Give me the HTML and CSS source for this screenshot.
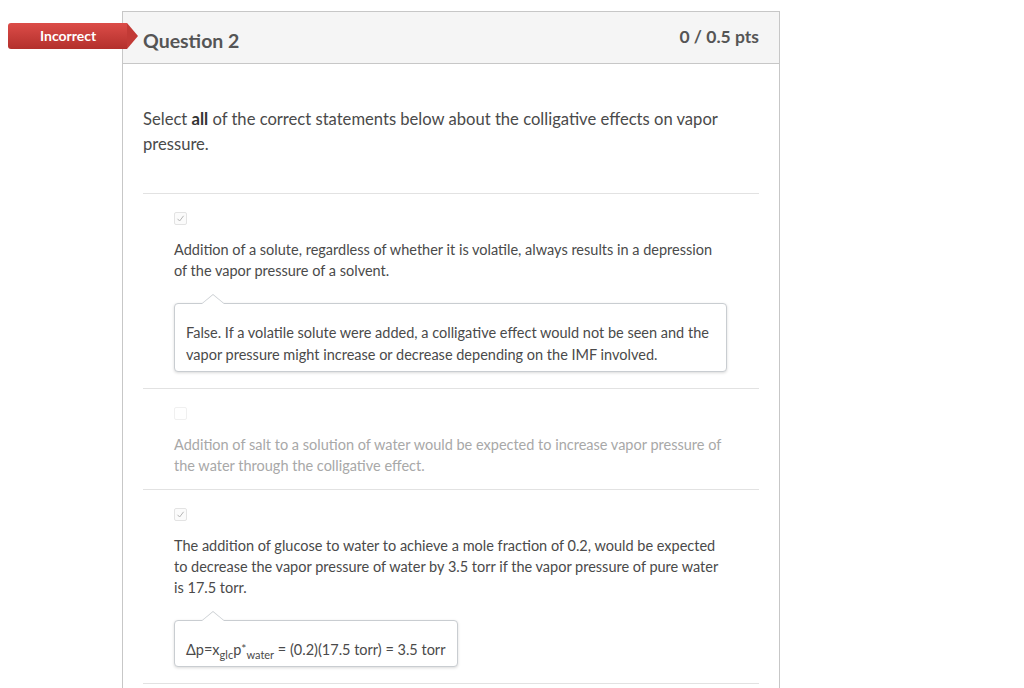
FILE: index.html
```html
<!DOCTYPE html>
<html>
<head>
<meta charset="utf-8">
<link rel="stylesheet" href="styles.css">
</head>
<body>
<div class="page">
  <div class="badge">Incorrect</div>
  <div class="card">
    <div class="card-header">
      <h2 class="q-title">Question 2</h2>
      <span class="q-points">0 / 0.5 pts</span>
    </div>
    <div class="card-body">
      <p class="q-text">Select <strong>all</strong> of the correct statements below about the colligative effects on vapor pressure.</p>
      <div class="answers">
        <div class="answer">
          <span class="check checked"><svg viewBox="0 0 13 13" width="13" height="13"><path d="M3.5 6.8 L5.6 9 L9.6 3.8" fill="none" stroke="#b5b5b5" stroke-width="1"/></svg></span>
          <div class="answer-text">Addition of a solute, regardless of whether it is volatile, always results in a depression of the vapor pressure of a solvent.</div>
          <div class="comment">False. If a volatile solute were added, a colligative effect would not be seen and the vapor pressure might increase or decrease depending on the IMF involved.</div>
        </div>
        <div class="answer muted">
          <span class="check faint"></span>
          <div class="answer-text">Addition of salt to a solution of water would be expected to increase vapor pressure of the water through the colligative effect.</div>
        </div>
        <div class="answer">
          <span class="check checked"><svg viewBox="0 0 13 13" width="13" height="13"><path d="M3.5 6.8 L5.6 9 L9.6 3.8" fill="none" stroke="#b5b5b5" stroke-width="1"/></svg></span>
          <div class="answer-text">The addition of glucose to water to achieve a mole fraction of 0.2, would be expected to decrease the vapor pressure of water by 3.5 torr if the vapor pressure of pure water is 17.5 torr.</div>
          <div class="comment">Δp=x<sub>glc</sub>p<sup>*</sup><sub>water</sub> = (0.2)(17.5 torr) = 3.5 torr</div>
        </div>
        <div class="answer-end"></div>
      </div>
    </div>
  </div>
</div>
</body>
</html>
```
FILE: styles.css
```css
html, body {
  margin: 0;
  padding: 0;
  background: #ffffff;
  font-family: Lato, "Open Sans", "Liberation Sans", sans-serif;
  color: #333333;
}

.page {
  position: relative;
  padding: 11px 0 0 122px;
  height: 677px;
  overflow: hidden;
}

.badge {
  position: absolute;
  left: 8px;
  top: 23px;
  width: 119px;
  height: 26px;
  line-height: 26px;
  box-sizing: border-box;
  padding-left: 32px;
  color: #ffffff;
  font-size: 14px;
  font-weight: 700;
  background: linear-gradient(#dc4c48, #b3302c);
  border-radius: 3px 0 0 3px;
  z-index: 2;
}

.badge::after {
  content: "";
  position: absolute;
  right: -11px;
  top: 0;
  border-top: 13px solid transparent;
  border-bottom: 13px solid transparent;
  border-left: 11px solid #c23a36;
}

.card {
  width: 656px;
  border: 1px solid #c7c7c7;
  border-bottom: none;
  min-height: 700px;
}

.card-header {
  height: 51px;
  background: #f5f5f5;
  border-bottom: 1px solid #c7c7c7;
  display: flex;
  align-items: flex-start;
  justify-content: space-between;
  padding: 0 20px;
}

.q-title {
  margin: 17px 0 0 0;
  font-size: 19.5px;
  font-weight: 700;
  color: #555555;
  line-height: 24px;
}

.q-points {
  margin-top: 14px;
  font-size: 17.5px;
  font-weight: 700;
  color: #555555;
  line-height: 22px;
}

.card-body {
  padding: 0 20px;
}

.q-text {
  margin: 43px 0 36px 0;
  font-size: 16.6px;
  line-height: 25px;
  color: #4a4a4a;
}

.q-text strong {
  font-weight: 700;
  color: #333333;
}

.answer {
  border-top: 1px solid #e2e2e2;
  padding: 18px 32px 12px 31px;
}

.answer.muted {
  padding-bottom: 13px;
}

.check {
  display: block;
  width: 13px;
  height: 13px;
  box-sizing: border-box;
  border: 1px solid #e3e3e3;
  border-radius: 2px;
  background: #fbfbfb;
}

.check svg {
  display: block;
  margin: -1px 0 0 -1px;
}

.check.faint {
  border-color: #f0f0f0;
  background: #ffffff;
}

.answer-text {
  margin-top: 14px;
  font-size: 14.5px;
  line-height: 21px;
  color: #4a4a4a;
}

.answer.muted .answer-text {
  color: #a8a8a8;
}

.comment {
  position: relative;
  display: inline-block;
  box-sizing: border-box;
  max-width: 100%;
  margin: 22px 0 4px 0;
  padding: 18px 12px 5px 11px;
  border: 1px solid #c9cdd1;
  border-radius: 4px;
  box-shadow: 0 1px 3px rgba(0, 0, 0, 0.15);
  background: #ffffff;
  font-size: 14.5px;
  line-height: 22px;
  color: #4a4a4a;
}

.comment::before {
  content: "";
  position: absolute;
  left: 26px;
  top: -10px;
  width: 0;
  height: 0;
  border-left: 12px solid transparent;
  border-right: 12px solid transparent;
  border-bottom: 10px solid #c9cdd1;
}

.comment::after {
  content: "";
  position: absolute;
  left: 27px;
  top: -9px;
  width: 0;
  height: 0;
  border-left: 11px solid transparent;
  border-right: 11px solid transparent;
  border-bottom: 9px solid #ffffff;
}

.comment sub {
  font-size: 11px;
  line-height: 0;
}

.comment sup {
  font-size: 12px;
  line-height: 0;
  vertical-align: 2px;
}

.answer-end {
  border-top: 1px solid #e2e2e2;
}
```
